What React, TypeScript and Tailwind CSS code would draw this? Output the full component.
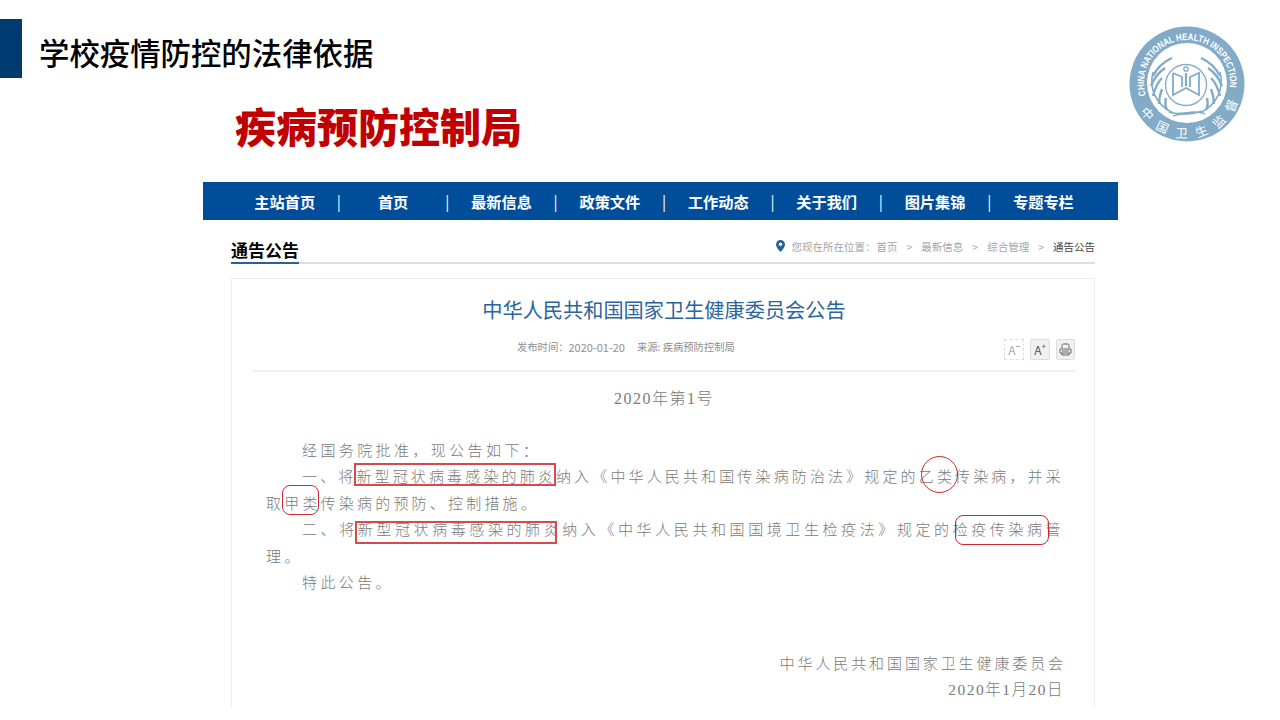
import React from 'react';

const cjk = '"Noto Sans CJK SC", sans-serif';
const serif = '"Liberation Serif", "Noto Sans CJK SC", serif';

const navItems = ['主站首页', '首页', '最新信息', '政策文件', '工作动态', '关于我们', '图片集锦', '专题专栏'];

// 右上角徽标
const Logo = () => (
  <svg width="116" height="116" viewBox="0 0 116 116">
    <defs>
      <path id="ringTop" d="M 58 100 A 43 43 0 1 1 58 14 A 43 43 0 1 1 58 100" />
      <path id="ringBottom" d="M 4 58 A 54 54 0 0 0 112 58" />
    </defs>
    <circle cx="58" cy="58" r="57.500" fill="#82abc7" />
    <circle cx="58" cy="57" r="40" fill="#ffffff" />
    <text fill="#ffffff" fontSize="9.600" fontWeight="700" fontFamily="Liberation Sans, sans-serif">
      <textPath href="#ringTop" startOffset="48.500%" textAnchor="middle" textLength="152" lengthAdjust="spacingAndGlyphs">CHINA NATIONAL HEALTH INSPECTION</textPath>
    </text>
    <text fill="#ffffff" fontSize="12.500" fontFamily={cjk} letterSpacing="9.500">
      <textPath href="#ringBottom" startOffset="56%" textAnchor="middle">中国卫生监督</textPath>
    </text>
    <g fill="none" stroke="#82abc7">
      <circle cx="57" cy="59" r="20.500" strokeWidth="1.300" />
      <path d="M44 47 V69 L57 62 L70 69 V47 L61 51 V61 M44 47 L53 51 V61" strokeWidth="1.800" />
      <circle cx="57" cy="43" r="2.200" strokeWidth="1.300" />
      <path d="M57 47 V60" strokeWidth="2.200" />
      <path d="M24 46 C20 62 26 78 44 87 M91 46 C95 62 89 78 71 87" strokeWidth="1.600" />
      <path d="M24 50 C28 42 34 36 43 32 M22 60 C25 52 30 46 36 42 M24 70 C26 62 29 56 33 52 M30 78 C30 72 31 68 33 63 M38 84 C36 80 36 76 37 72" strokeWidth="2.400" />
      <path d="M91 50 C87 42 81 36 72 32 M93 60 C90 52 85 46 79 42 M91 70 C89 62 86 56 82 52 M85 78 C85 72 84 68 82 63 M77 84 C79 80 79 76 78 72" strokeWidth="2.400" />
      <path d="M40 86 C50 91 66 82 76 88 M44 90 C54 86 62 90 72 85" strokeWidth="1.500" />
    </g>
  </svg>
);

const Annotation = ({ className }: { className: string }) => (
  <div className={`absolute ${className}`} />
);

export default function App() {
  return (
    <div className="relative w-[1280px] h-[720px] overflow-hidden bg-white" style={{ fontFamily: cjk }}>
      {/* 页头 */}
      <div className="flex justify-between pt-[19px] pr-[35px] h-[82px]">
        <div className="flex">
          <div className="w-[22px] h-[59px] bg-[#013a70]" />
          <h1 className="ml-[17px] text-[30.400px] leading-[66px] font-medium text-black">学校疫情防控的法律依据</h1>
        </div>
        <div className="mt-[7px]"><Logo /></div>
      </div>

      <div className="ml-[203px] w-[915px]">
        <div className="pl-[32px] pt-[18px] text-[41px] leading-[50px] font-black text-[#c00000] h-[100px]">疾病预防控制局</div>

        {/* 导航 */}
        <div className="flex items-center h-[38px] pt-[1px] bg-[#004d99] text-[15.200px] font-bold text-white pl-[35.500px]">
          {navItems.map((item, i) => (
            <React.Fragment key={item}>
              <span className="w-[92.400px] text-center">{item}</span>
              {i < navItems.length - 1 && <span className="w-[16px] text-center font-normal">|</span>}
            </React.Fragment>
          ))}
        </div>

        <div className="mx-[28px] w-[864px]">
          {/* 面包屑 */}
          <div className="flex justify-between items-end h-[44px] border-b-2 border-[#dddddd]">
            <span className="text-[17px] leading-[24px] font-bold text-black border-b-2 border-[#2a5f9a] -mb-[2px]">通告公告</span>
            <div className="flex items-center h-[42px] pt-[12px] text-[10.500px] text-[#a5a5a5]">
              <svg width="9" height="12" viewBox="0 0 9 12" className="mr-[7px] -mt-[2px]">
                <path d="M4.500 0C2 0 0 2 0 4.500 0 7.500 4.500 12 4.500 12S9 7.500 9 4.500C9 2 7 0 4.500 0Z" fill="#2a5f9a" />
                <circle cx="4.500" cy="4.300" r="1.700" fill="#ffffff" />
              </svg>
              <span>您现在所在位置：</span>
              <span className="ml-[1px]">首页</span>
              <span className="mx-[9px]">&gt;</span>
              <span>最新信息</span>
              <span className="mx-[9px]">&gt;</span>
              <span>综合管理</span>
              <span className="mx-[9px]">&gt;</span>
              <span className="text-[#444444]">通告公告</span>
            </div>
          </div>

          {/* 公告卡片 */}
          <div className="relative mt-[14px] h-[430px] border border-b-0 border-[#eeeeee] px-[20px]">
            <div className="pt-[16px] text-center text-[20.200px] leading-[30px] text-[#2a659e] pl-[2px]">中华人民共和国国家卫生健康委员会公告</div>
            <div className="relative h-[47px] border-b-2 border-[#f0f0f0] w-[824px] pt-[14px]">
              <div className="flex pl-[265px] text-[10.300px] leading-[16px] text-[#8f8f8f]">
                <span>发布时间：</span>
                <span className="text-[11px]">2020-01-20</span>
                <span className="ml-[12px]">来源: 疾病预防控制局</span>
              </div>
              <div className="absolute right-[1px] top-[14px] flex gap-[6px] text-[#666666]">
                <div className="flex items-center justify-center w-[20px] h-[21px] border border-dashed border-[#dddddd] text-[12px] text-[#aaaaaa]">
                  A<span className="w-[4px] h-px bg-[#aaaaaa] -mt-[7px]" />
                </div>
                <div className="flex items-center justify-center w-[20px] h-[21px] rounded-[2px] border border-[#dddddd] bg-[#f1f1f1] text-[12px] text-[#555555]">A<sup className="text-[8px]">+</sup></div>
                <div className="flex items-center justify-center w-[19px] h-[21px] rounded-[2px] border border-[#dddddd] bg-[#f1f1f1]">
                  <svg width="13" height="13" viewBox="0 0 13 13" fill="none" stroke="#666666">
                    <path d="M3 5V2.500C3 1.500 3.500 1 4.500 1H9C10 1 10 2 10 2.500V5M1 6H12V10H1ZM3 10V12H10V10M3 8H10" />
                  </svg>
                </div>
              </div>
            </div>

            <div className="text-[#7a7a7a] text-[15px] font-light" style={{ fontFamily: serif }}>
              <div className="pt-[14px] h-[52px] text-center leading-[26px] pl-[2px] tracking-[1.500px] text-[16px]">2020年第1号</div>
              <div className="pt-[14px] leading-[26.400px]">
                <div className="pl-[50px] tracking-[3.400px]">经国务院批准，现公告如下：</div>
                <div className="pl-[50px] tracking-[3.140px] whitespace-nowrap">一、将新型冠状病毒感染的肺炎纳入《中华人民共和国传染病防治法》规定的乙类传染病，并采</div>
                <div className="pl-[14px] tracking-[3.200px] whitespace-nowrap">取甲类传染病的预防、控制措施。</div>
                <div className="pl-[50px] tracking-[3.590px] whitespace-nowrap">二、将新型冠状病毒感染的肺炎纳入《中华人民共和国国境卫生检疫法》规定的检疫传染病管</div>
                <div className="pl-[14px] tracking-[3.400px]">理。</div>
                <div className="pl-[50px] tracking-[3.400px]">特此公告。</div>
              </div>
              <div className="pt-[55px] text-right leading-[26px] pr-[11px]">
                <div className="tracking-[2.900px] -mr-[3px]">中华人民共和国国家卫生健康委员会</div>
                <div className="tracking-[1.500px] -mr-[1px] text-[15.500px]">2020年1月20日</div>
              </div>
            </div>
          </div>
        </div>
      </div>

      {/* 红色标注 */}
      <Annotation className="left-[354px] top-[463px] w-[202px] h-[23px] border-2 border-[#d44a4e]" />
      <Annotation className="left-[355px] top-[521px] w-[202px] h-[23px] border-2 border-[#d44a4e]" />
      <Annotation className="left-[282px] top-[485px] w-[37px] h-[30px] rounded-[8px] border border-[#cc2a30]" />
      <Annotation className="left-[955px] top-[515px] w-[94px] h-[30px] rounded-[8px] border border-[#cc2a30]" />
      <Annotation className="left-[921px] top-[456px] w-[37px] h-[37px] rounded-full border border-[#cc2a30]" />

      {/* 图片底部的白边 */}
      <div className="absolute left-0 right-0 top-[708px] h-[12px] bg-white" />
    </div>
  );
}
